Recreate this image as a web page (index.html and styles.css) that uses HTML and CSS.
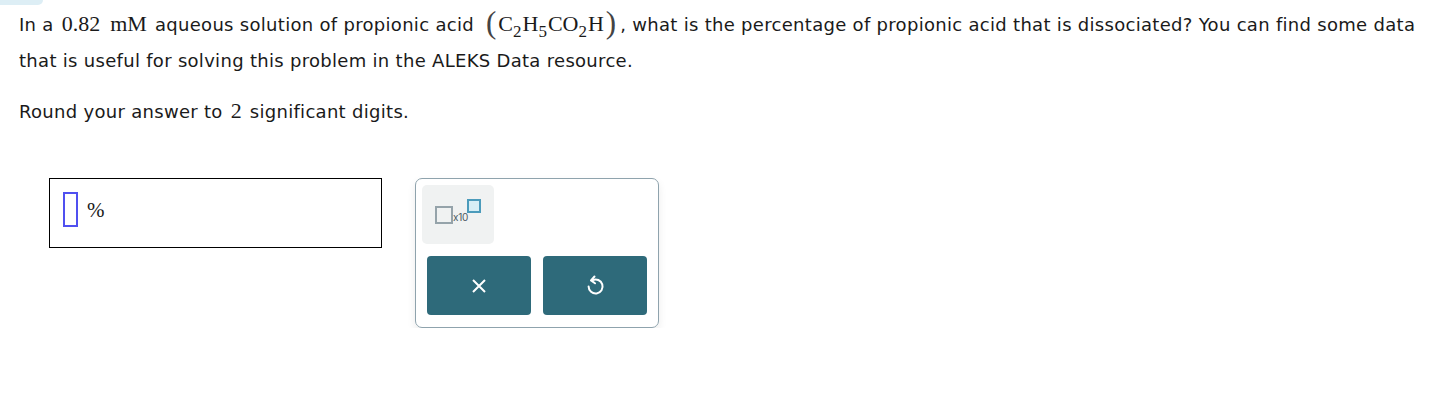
FILE: index.html
```html
<!DOCTYPE html>
<html>
<head>
<meta charset="utf-8">
<link rel="stylesheet" href="styles.css">
</head>
<body>
<div class="tab"></div>
<div class="question">
  <p class="para">In a <span class="m">0.82</span> <span class="m">mM</span> aqueous solution of propionic acid <span class="m chem"><span class="paren">(</span>C<sub>2</sub>H<sub>5</sub>CO<sub>2</sub>H<span class="paren">)</span></span>, what is the percentage of propionic acid that is dissociated? You can find some data that is useful for solving this problem in the ALEKS Data resource.</p>
  <p class="para round">Round your answer to <span class="m">2</span> significant digits.</p>
</div>
<div class="answer">
  <div class="input">
    <span class="cursor"></span>
    <span class="pct">%</span>
  </div>
  <div class="keypad">
    <div class="sci">
      <span class="box"></span><span class="x10">x10</span><span class="sup"></span>
    </div>
    <div class="actions">
      <button class="btn"><svg width="16" height="16" viewBox="0 0 16 16"><path d="M2 2L14 14M14 2L2 14" stroke="#fff" stroke-width="2" fill="none"/></svg></button>
      <button class="btn"><svg width="20" height="22" viewBox="0 0 20 22"><path d="M7.5 5.2A7 7 0 1 1 3.6 11.5" stroke="#fff" stroke-width="2" fill="none" stroke-linecap="round"/><path d="M9.5 1.5L6 5.4L10 8.3" stroke="#fff" stroke-width="2" fill="none" stroke-linecap="round" stroke-linejoin="round"/></svg></button>
    </div>
  </div>
</div>
</body>
</html>
```

FILE: styles.css
```css
body {
  margin: 0;
  background: #fff;
  font-family: Verdana, "DejaVu Sans", sans-serif;
  font-size: 18px;
  letter-spacing: 0.3px;
  color: #1a1a1a;
}
.tab {
  position: absolute;
  left: 0;
  top: 0;
  width: 43px;
  height: 5px;
  background: #ddeef5;
  border-bottom-right-radius: 6px;
}
.question {
  padding: 6px 18px 0 19px;
}
.para {
  margin: 0;
  line-height: 36px;
}
.round {
  margin-top: 14px;
}
.m {
  font-family: "Liberation Serif", "Times New Roman", serif;
  font-size: 22px;
  letter-spacing: 0;
  margin: 0 2px;
}
.chem {
  margin-left: 4px;
}
.chem sub {
  font-size: 17px;
  vertical-align: -6px;
  line-height: 0;
  padding-right: 1px;
}
.paren {
  font-size: 31px;
  color: #444;
  vertical-align: -2px;
  line-height: 0;
  margin: 0 2px;
}
.answer {
  display: flex;
  align-items: flex-start;
  gap: 33px;
  margin-top: 48px;
  padding-left: 49px;
}
.input {
  box-sizing: border-box;
  width: 333px;
  height: 70px;
  border: 1px solid #000;
  display: flex;
  align-items: flex-start;
  padding: 13px 0 0 13px;
  gap: 9px;
}
.cursor {
  box-sizing: border-box;
  width: 15px;
  height: 35px;
  border: 2px solid #5050f0;
  background: #fff;
}
.pct {
  font-family: "Liberation Serif", "Times New Roman", serif;
  font-size: 21px;
  letter-spacing: 0;
  margin-top: 6px;
}
.keypad {
  box-sizing: border-box;
  width: 244px;
  height: 150px;
  border: 1px solid #8fa3ad;
  border-radius: 7px;
  box-shadow: 0 4px 8px rgba(0, 0, 0, 0.08);
  padding: 6px 11px 0 6px;
}
.sci {
  width: 72px;
  height: 59px;
  background: #f0f2f2;
  border-radius: 5px;
  position: relative;
}
.box {
  position: absolute;
  left: 13px;
  top: 21px;
  box-sizing: border-box;
  width: 18px;
  height: 18px;
  border: 2px solid #95a3aa;
}
.x10 {
  position: absolute;
  left: 31px;
  top: 26px;
  font-family: Inter, "Open Sans", sans-serif;
  font-size: 10px;
  color: #4a5a62;
  letter-spacing: -0.3px;
}
.sup {
  position: absolute;
  left: 45px;
  top: 14px;
  width: 14px;
  height: 14px;
  box-sizing: border-box;
  border: 2px solid #4b9bbb;
  background: #d6eef5;
}
.actions {
  display: flex;
  gap: 12px;
  margin-top: 12px;
  padding-left: 5px;
}
.btn {
  width: 104px;
  height: 59px;
  border: none;
  border-radius: 4px;
  background: #2e6a7a;
  display: flex;
  align-items: center;
  justify-content: center;
  padding: 0;
}
```
